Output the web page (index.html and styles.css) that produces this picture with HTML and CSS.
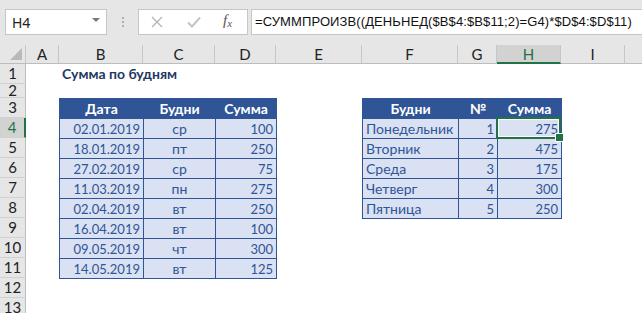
FILE: index.html
```html
<!DOCTYPE html>
<html lang="ru">
  <head>
    <meta charset="UTF-8" />
    <meta name="viewport" content="width=device-width, initial-scale=1.0" />
    <title>Сумма по будням</title>
    <link rel="stylesheet" href="styles.css">
  </head>
  <body>
    <div class="toolbar">
      <div class="namebox">
        <span>H4</span>
        <span class="caret"></span>
      </div>
      <div class="grip"><i></i><i></i><i></i></div>
      <div class="fxbox">
        <svg class="cancel" width="12" height="12" viewBox="0 0 12 12">
          <path d="M1 1 L11 11 M11 1 L1 11" stroke="#b4b4b4" stroke-width="1.3" fill="none" />
        </svg>
        <svg class="enter" width="14" height="12" viewBox="0 0 14 12">
          <path d="M1 6.5 L5 10.5 L13 1.5" stroke="#c4c4c4" stroke-width="2" fill="none" />
        </svg>
        <span class="fx">f<sub>x</sub></span>
      </div>
      <div class="formula">=СУММПРОИЗВ((ДЕНЬНЕД($B$4:$B$11;2)=G4)*$D$4:$D$11)</div>
    </div>

    <div class="sheet">
      <div class="corner"><span></span></div>
      <div class="ch">A</div>
      <div class="ch">B</div>
      <div class="ch">C</div>
      <div class="ch">D</div>
      <div class="ch">E</div>
      <div class="ch">F</div>
      <div class="ch">G</div>
      <div class="ch active">H</div>
      <div class="ch">I</div>
      <div class="ch last"></div>

      <div class="rh">1</div>
      <div class="rh short">2</div>
      <div class="rh">3</div>
      <div class="rh active">4</div>
      <div class="rh">5</div>
      <div class="rh">6</div>
      <div class="rh">7</div>
      <div class="rh">8</div>
      <div class="rh">9</div>
      <div class="rh">10</div>
      <div class="rh">11</div>
      <div class="rh">12</div>
      <div class="rh">13</div>

      <div class="title">Сумма по будням</div>

      <table class="tbl dates">
        <colgroup><col class="c-b"><col class="c-c"><col class="c-d"></colgroup>
        <tr><th>Дата</th><th>Будни</th><th>Сумма</th></tr>
        <tr><td class="r">02.01.2019</td><td class="m">ср</td><td class="r">100</td></tr>
        <tr><td class="r">18.01.2019</td><td class="m">пт</td><td class="r">250</td></tr>
        <tr><td class="r">27.02.2019</td><td class="m">ср</td><td class="r">75</td></tr>
        <tr><td class="r">11.03.2019</td><td class="m">пн</td><td class="r">275</td></tr>
        <tr><td class="r">02.04.2019</td><td class="m">вт</td><td class="r">250</td></tr>
        <tr><td class="r">16.04.2019</td><td class="m">вт</td><td class="r">100</td></tr>
        <tr><td class="r">09.05.2019</td><td class="m">чт</td><td class="r">300</td></tr>
        <tr><td class="r">14.05.2019</td><td class="m">вт</td><td class="r">125</td></tr>
      </table>

      <table class="tbl days">
        <colgroup><col class="c-f"><col class="c-g"><col class="c-h"></colgroup>
        <tr><th>Будни</th><th>№</th><th>Сумма</th></tr>
        <tr><td>Понедельник</td><td class="r">1</td><td class="r">275</td></tr>
        <tr><td>Вторник</td><td class="r">2</td><td class="r">475</td></tr>
        <tr><td>Среда</td><td class="r">3</td><td class="r">175</td></tr>
        <tr><td>Четверг</td><td class="r">4</td><td class="r">300</td></tr>
        <tr><td>Пятница</td><td class="r">5</td><td class="r">250</td></tr>
      </table>

      <div class="selection"></div>
    </div>
  </body>
</html>
```

FILE: styles.css
```css
* {
  margin: 0;
  padding: 0;
  box-sizing: border-box;
}

body {
  width: 642px;
  height: 313px;
  overflow: hidden;
  background: #fff;
  font-family: Lato, "Open Sans", sans-serif;
  color: #000;
}

/* Formula bar */
.toolbar {
  height: 45px;
  background: #e6e6e6;
  display: flex;
  align-items: flex-start;
  padding: 9px 0 0 5px;
  font-family: "Noto Sans", "Open Sans", sans-serif;
}

.namebox {
  width: 102px;
  height: 26px;
  background: #fff;
  border: 1px solid #c6c6c6;
  display: flex;
  align-items: center;
  justify-content: space-between;
  padding: 0 6px 0 6px;
  font-size: 14px;
  color: #222;
}

.caret {
  width: 0;
  height: 0;
  border-left: 4px solid transparent;
  border-right: 4px solid transparent;
  border-top: 4px solid #7a7a7a;
  margin-top: -4px;
}

.grip {
  width: 31px;
  height: 26px;
  display: flex;
  flex-direction: column;
  align-items: center;
  justify-content: center;
  gap: 2px;
}

.grip i {
  width: 2px;
  height: 2px;
  background: #b0b0b0;
}

.fxbox {
  width: 110px;
  height: 26px;
  background: #fff;
  border: 1px solid #c6c6c6;
  display: flex;
  align-items: center;
  padding: 0 0 0 12px;
}

.enter {
  margin-left: 24px;
}

.fx {
  font-family: "Liberation Serif", serif;
  font-style: italic;
  font-size: 15px;
  color: #555;
  margin-left: 22px;
  margin-top: -3px;
}

.fx sub {
  font-size: 11px;
  vertical-align: -2px;
}

.formula {
  flex: 1;
  min-width: 0;
  height: 26px;
  margin-left: 3px;
  background: #fff;
  border: 1px solid #c6c6c6;
  border-right: none;
  padding: 0 0 0 3px;
  font-family: "Liberation Sans", sans-serif;
  font-size: 13px;
  letter-spacing: 0.1px;
  line-height: 24px;
  color: #111;
  white-space: nowrap;
  overflow: hidden;
}

/* Sheet grid */
.sheet {
  display: grid;
  grid-template-columns: 26px 33px 84px 72px 61px 86px 96px 39px 64px 64px 1fr;
  grid-template-rows: 19px 20px 14px repeat(11, 20px);
}

.corner {
  background: #e6e6e6;
  border-right: 1px solid #c6c6c6;
  border-bottom: 1px solid #bdbdbd;
  position: relative;
}

.corner span {
  position: absolute;
  right: 3px;
  bottom: 3px;
  width: 0;
  height: 0;
  border-left: 12px solid transparent;
  border-bottom: 12px solid #b9b9b9;
}

.ch {
  background: #e6e6e6;
  border-right: 1px solid #c6c6c6;
  border-bottom: 1px solid #bdbdbd;
  text-align: center;
  font-size: 15px;
  line-height: 18px;
  color: #222;
}

.ch.last {
  border-right: none;
}

.ch.active {
  background: #d2d2d2;
  color: #217346;
  border-bottom: 2px solid #217346;
}

.rh {
  grid-column: 1;
  background: #e6e6e6;
  border-right: 1px solid #bdbdbd;
  border-bottom: 1px solid #d0d0d0;
  text-align: center;
  font-size: 15px;
  line-height: 19px;
  color: #222;
}

.rh.short {
  line-height: 13px;
}

.rh.active {
  background: #d2d2d2;
  color: #217346;
  border-right: 2px solid #217346;
}

.title {
  grid-column: 3 / 6;
  grid-row: 2;
  padding: 0 3px;
  font-size: 14px;
  font-weight: bold;
  line-height: 20px;
  color: #1f3864;
}

/* Data tables */
.tbl {
  border-collapse: collapse;
  table-layout: fixed;
  font-size: 14px;
  color: #2f5597;
  align-self: start;
}

.tbl.dates {
  grid-column: 3 / 6;
  grid-row: 4 / 13;
  width: 217px;
}

.tbl.days {
  grid-column: 7 / 10;
  grid-row: 4 / 10;
  width: 199px;
}

.c-b { width: 84px; }
.c-c { width: 72px; }
.c-d { width: 61px; }
.c-f { width: 96px; }
.c-g { width: 39px; }
.c-h { width: 64px; }

.tbl th,
.tbl td {
  height: 20px;
  padding: 0 3px;
  border: 1px solid #2f5597;
  line-height: 18px;
  white-space: nowrap;
  overflow: hidden;
}

.tbl th {
  background: #2f5597;
  color: #fff;
  font-weight: bold;
  text-align: center;
}

.tbl td {
  background: #d9e1f2;
  text-align: left;
}

.tbl td.r {
  text-align: right;
  font-size: 13px;
}

.tbl td.m {
  text-align: center;
}

.selection {
  grid-column: 9;
  grid-row: 5;
  margin: -1px 0 -1px -1px;
  border: 2px solid #217346;
  box-shadow: inset 0 0 0 1px #fff;
  position: relative;
  z-index: 2;
}

.selection::after {
  content: "";
  position: absolute;
  right: -5px;
  bottom: -5px;
  width: 7px;
  height: 7px;
  background: #217346;
  border: 1px solid #fff;
}
```
